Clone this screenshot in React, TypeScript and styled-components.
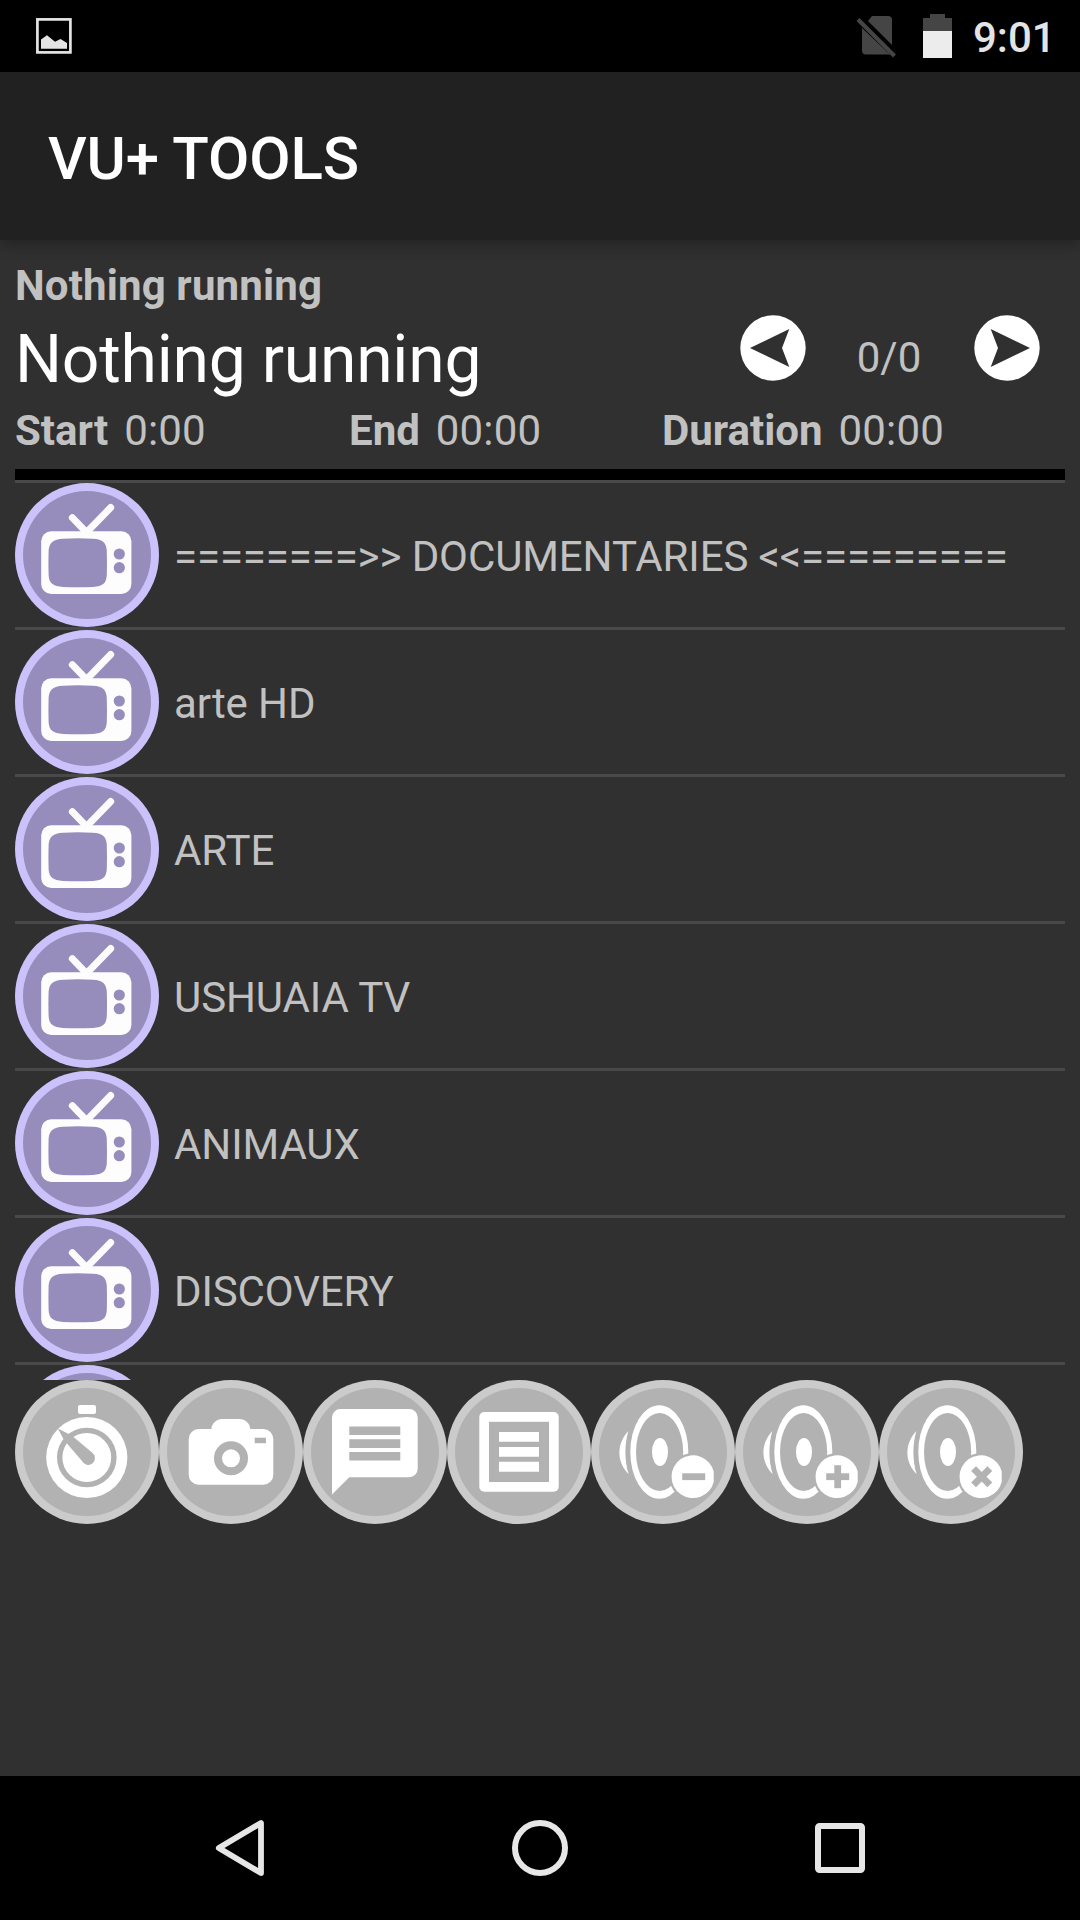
import React from "react";
import styled, { createGlobalStyle } from "styled-components";

const GlobalStyle = createGlobalStyle`
  *, *::before, *::after { box-sizing: border-box; }
  html, body { margin: 0; padding: 0; background: #303030; }
  body { font-family: Roboto, "Noto Sans", sans-serif; overflow: hidden; }
  svg { display: block; flex: none; }
`;

const Screen = styled.div`
  display: flex;
  flex-direction: column;
  width: 1080px;
  height: 1920px;
  background: #303030;
  color: #c1c1c1;
  font-size: 42px;
  overflow: hidden;
`;

const StatusBar = styled.header`
  flex: none;
  display: flex;
  align-items: center;
  justify-content: space-between;
  height: 72px;
  padding: 0 29px 0 36px;
  background: #000;
`;

const StatusIcons = styled.div`
  display: flex;
  align-items: center;
  height: 72px;
`;

const BatteryGap = styled.div`
  margin-left: 25px;
`;

const Clock = styled.span`
  width: 78px;
  margin-left: 21px;
  padding-top: 4px;
  color: #e4e4e4;
  font-weight: 500;
  line-height: 72px;
  white-space: nowrap;
`;

const AppBar = styled.div`
  flex: none;
  display: flex;
  align-items: center;
  height: 168px;
  padding: 5px 48px 0;
  background: #212121;
  box-shadow: 0 5px 14px rgba(0, 0, 0, 0.28);
`;

const AppTitle = styled.h1`
  margin: 0;
  color: #fff;
  font-size: 60px;
  font-weight: 500;
  letter-spacing: -0.12px;
  line-height: 70px;
`;

const Content = styled.main`
  flex: 1;
  min-height: 0;
  padding: 15px 15px 0;
`;

const Channel = styled.div`
  font-weight: 700;
  letter-spacing: 0.15px;
  line-height: 61px;
`;

const EventRow = styled.div`
  display: flex;
  align-items: flex-start;
  height: 87px;
`;

const EventTitle = styled.div`
  width: 725px;
  color: #fff;
  font-size: 66px;
  letter-spacing: -0.24px;
  line-height: 87px;
`;

const RoundButton = styled.button`
  flex: none;
  width: 66px;
  height: 66px;
  margin: -1px 0 0;
  padding: 0;
  border: 0;
  background: none;
`;

const Counter = styled.div`
  width: 168px;
  padding-right: 2px;
  text-align: center;
  line-height: 83px;
`;

const Times = styled.div`
  display: grid;
  grid-template-columns: 334px 313px 1fr;
  margin-bottom: 11px;
  line-height: 55px;
`;

const TimeField = styled.div`
  display: flex;
  gap: 16px;
`;

const Label = styled.b`
  font-weight: 700;
`;

const Value = styled.span`
  letter-spacing: 0.15px;
`;

const Progress = styled.div`
  height: 11px;
  background: #000;
`;

const List = styled.ul`
  height: 900px;
  margin: 0;
  padding: 0;
  border-top: 3px solid #494949;
  list-style: none;
  overflow: hidden;
`;

const Item = styled.li`
  display: flex;
  align-items: center;
  gap: 15px;
  height: 147px;
  border-bottom: 3px solid #494949;
  line-height: 60px;
  white-space: nowrap;
`;

const ItemName = styled.span`
  padding-top: 4px;
  letter-spacing: -0.1px;
`;

const Tools = styled.div`
  display: flex;
`;

const ToolButton = styled.button`
  width: 144px;
  height: 144px;
  padding: 0;
  border: 0;
  background: none;
`;

const NavBar = styled.nav`
  flex: none;
  display: grid;
  grid-template-columns: repeat(3, 100px);
  justify-content: center;
  column-gap: 200px;
  height: 144px;
  align-items: center;
  justify-items: center;
  background: #000;
`;

const PictureIcon = () => (
  <svg width="36" height="36" viewBox="0 0 36 36">
    <rect x="1.4" y="1.4" width="33" height="33" fill="none" stroke="#e4e4e4" strokeWidth="2.7" />
    <path d="M5 30.7V21.5L11 17.2 19 23.8 24.5 21 31 25V30.7Z" fill="#e4e4e4" />
  </svg>
);

const NoSimIcon = () => (
  <svg width="42" height="44" viewBox="0 0 42 44">
    <path d="M16 2H32Q36 2 36 6V31L12 7ZM6 14 34.500 41Q33.500 40.500 32 40.500H10Q6 40.500 6 36.500Z" fill="#454545" />
    <path d="M2 5.500 38.500 42" stroke="#454545" strokeWidth="4" fill="none" />
  </svg>
);

const BatteryIcon = () => (
  <svg width="29" height="44" viewBox="0 0 29 44">
    <path d="M0 4H7V0H22V4H29V17H0Z" fill="#454545" />
    <rect y="17" width="29" height="27" fill="#ececec" />
  </svg>
);

const Arrow = ({ flip = false }: { flip?: boolean }) => (
  <svg width="66" height="66" viewBox="0 0 66 66">
    <g transform={flip ? "translate(66 0) scale(-1 1)" : undefined}>
      <circle cx="33" cy="33" r="32.7" fill="#fff" />
      <path d="M10 33 49.300 14 42 33 49.300 52Z" fill="#303030" />
    </g>
  </svg>
);

interface DiscProps {
  ring: string;
  fill: string;
  children: React.ReactNode;
}

const Disc = ({ ring, fill, children }: DiscProps) => (
  <svg width="144" height="144" viewBox="0 0 144 144">
    <circle cx="72" cy="72" r="72" fill={ring} />
    <circle cx="72" cy="72" r="64" fill={fill} />
    {children}
  </svg>
);

const TvIcon = () => (
  <Disc ring="#cbc2fb" fill="#968dbd">
    <path d="M57.300 34.700 71.500 49.500 95.700 24.500" fill="none" stroke="#fcfcfc" strokeWidth="6.900" strokeLinecap="round" />
    <rect x="26.200" y="48.300" width="90.200" height="62.700" rx="10" fill="#fdfdfd" />
    <path
      d="M48 55.700Q62.700 55 78 55.700C88 56.200 91.300 60 91.800 68Q92.200 80 91.800 92C91.300 100 88 103.400 78 103.900Q62.700 104.600 48 103.900C38 103.400 34 100 33.600 92Q33.200 80 33.600 68C34 60 38 56.200 48 55.700Z"
      fill="#968dbd"
    />
    <circle cx="104.300" cy="71" r="5.600" fill="#968dbd" />
    <circle cx="104.300" cy="84.700" r="5.600" fill="#968dbd" />
  </Disc>
);

const GRAY = "#b2b2b2";

const TimerGlyph = () => (
  <>
    <rect x="63" y="25" width="18" height="9" rx="2" fill="#fff" />
    <circle cx="71.800" cy="77.500" r="40.600" fill="#fff" />
    <circle cx="71.800" cy="77.500" r="27.100" fill="none" stroke={GRAY} strokeWidth="5.400" />
    <path d="M42.800 48.500 56.700 55.500 77 72.500A6.800 6.800 0 1 1 67 81L49 60Z" fill={GRAY} />
  </>
);

const CameraGlyph = () => (
  <>
    <rect x="29.700" y="49" width="84.600" height="55.700" rx="10" fill="#fff" />
    <path d="M52.300 50C52.300 43 58 39 63 39H80.500C86 39 91.300 43 91.300 50Z" fill="#fff" />
    <circle cx="72" cy="78.300" r="13" fill="none" stroke={GRAY} strokeWidth="8" />
    <rect x="95.700" y="57.700" width="11.300" height="5.500" fill={GRAY} />
  </>
);

const MessageGlyph = () => (
  <>
    <path d="M37.500 29H106.200A8.500 8.500 0 0 1 114.700 37.500V88.800A8.500 8.500 0 0 1 106.200 97.300H46.300L29 114.500V37.500A8.500 8.500 0 0 1 37.500 29Z" fill="#fff" />
    <path d="M46.300 46.400H97.300V55H46.300ZM46.300 59.300H97.300V68H46.300ZM46.300 72H97.300V80.600H46.300Z" fill={GRAY} />
  </>
);

const ListGlyph = () => (
  <>
    <rect x="32.300" y="32" width="79.400" height="79.700" rx="5" fill="#fff" />
    <rect x="42" y="41.800" width="60" height="60.200" fill={GRAY} />
    <path d="M52 52H92V61.800H52ZM52 67H92V76.800H52ZM52 81.800H92V91.700H52Z" fill="#fff" />
  </>
);

type Mark = "minus" | "plus" | "times";

const SpeakerGlyph = ({ mark }: { mark: Mark }) => (
  <>
    <path d="M37.300 51C25.400 64 25.400 81.500 37.700 94.300 33.400 80 33.400 65 37.300 51Z" fill="#fff" />
    <path
      fillRule="evenodd"
      d="M39.300 72A29 46.800 0 0 1 97.300 72 29 46.800 0 0 1 39.300 72ZM45 72A23.600 39 0 0 0 92.200 72 23.600 39 0 0 0 45 72Z"
      fill="#fff"
    />
    <ellipse cx="69" cy="72" rx="8" ry="14" fill="#fff" />
    <circle cx="102" cy="96.700" r="23.800" fill={GRAY} />
    <path d="M122.700 91.500V101.900A21.400 21.400 0 1 1 122.700 91.500Z" fill="#fff" />
    <g transform={mark === "times" ? "rotate(45 102.700 96.700)" : undefined} fill={GRAY}>
      <rect x="91.200" y="93.300" width="23" height="6.800" />
      {mark !== "minus" && <rect x="99.300" y="85.200" width="6.800" height="23" />}
    </g>
  </>
);

const channels = [
  "========>> DOCUMENTARIES <<=========",
  "arte HD",
  "ARTE",
  "USHUAIA TV",
  "ANIMAUX",
  "DISCOVERY",
  "",
];

const times = [
  { label: "Start", value: "0:00" },
  { label: "End", value: "00:00" },
  { label: "Duration", value: "00:00" },
];

const tools = [
  { name: "Timer", glyph: <TimerGlyph /> },
  { name: "Screenshot", glyph: <CameraGlyph /> },
  { name: "Message", glyph: <MessageGlyph /> },
  { name: "List", glyph: <ListGlyph /> },
  { name: "Volume down", glyph: <SpeakerGlyph mark="minus" /> },
  { name: "Volume up", glyph: <SpeakerGlyph mark="plus" /> },
  { name: "Mute", glyph: <SpeakerGlyph mark="times" /> },
];

export default function App() {
  return (
    <>
      <GlobalStyle />
      <Screen>
        <StatusBar>
          <PictureIcon />
          <StatusIcons>
            <NoSimIcon />
            <BatteryGap>
              <BatteryIcon />
            </BatteryGap>
            <Clock>9:01</Clock>
          </StatusIcons>
        </StatusBar>
        <AppBar>
          <AppTitle>VU+ TOOLS</AppTitle>
        </AppBar>
        <Content>
          <Channel>Nothing running</Channel>
          <EventRow>
            <EventTitle>Nothing running</EventTitle>
            <RoundButton aria-label="Previous">
              <Arrow />
            </RoundButton>
            <Counter>0/0</Counter>
            <RoundButton aria-label="Next">
              <Arrow flip />
            </RoundButton>
          </EventRow>
          <Times>
            {times.map((t) => (
              <TimeField key={t.label}>
                <Label>{t.label}</Label>
                <Value>{t.value}</Value>
              </TimeField>
            ))}
          </Times>
          <Progress />
          <List>
            {channels.map((name, i) => (
              <Item key={i}>
                <TvIcon />
                <ItemName>{name}</ItemName>
              </Item>
            ))}
          </List>
          <Tools>
            {tools.map((tool) => (
              <ToolButton key={tool.name} aria-label={tool.name}>
                <Disc ring="#cbcbcb" fill={GRAY}>
                  {tool.glyph}
                </Disc>
              </ToolButton>
            ))}
          </Tools>
        </Content>
        <NavBar>
          <svg width="100" height="60" viewBox="0 0 100 60">
            <path d="M71 5V55L28.800 30Z" fill="none" stroke="#e6e6e6" strokeWidth="5.800" strokeLinejoin="round" />
          </svg>
          <svg width="60" height="60" viewBox="0 0 60 60">
            <circle cx="30" cy="30" r="25" fill="none" stroke="#e6e6e6" strokeWidth="6" />
          </svg>
          <svg width="60" height="60" viewBox="0 0 60 60">
            <rect x="8" y="8" width="44" height="44" rx="1.500" fill="none" stroke="#e6e6e6" strokeWidth="6" />
          </svg>
        </NavBar>
      </Screen>
    </>
  );
}
